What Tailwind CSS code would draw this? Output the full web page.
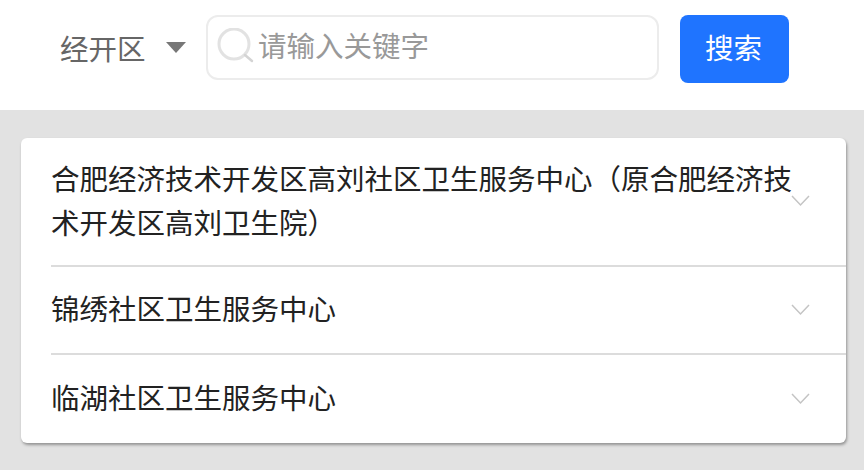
<!DOCTYPE html>
<html lang="zh-CN">
<head>
    <meta charset="UTF-8">
    <meta name="viewport" content="width=device-width, initial-scale=1.0">
    <title>社区卫生服务中心</title>
    <script src="https://cdn.jsdelivr.net/npm/@tailwindcss/browser@4"></script>
</head>
<body class="h-[470px] overflow-hidden bg-[#e2e2e2] font-['Roboto','Noto_Sans_CJK_SC',sans-serif]">
    <!-- Search bar -->
    <div class="h-[110px] bg-white flex items-start pt-[15px]">
        <div class="ml-[60px] w-[146px] h-[64px] flex items-center shrink-0">
            <span class="text-[28.5px] leading-[70px] pt-[7px] text-[#666]">经开区</span>
            <svg class="ml-[19px] mt-[1px]" width="22" height="13" viewBox="0 0 22 13"><path d="M1 1h20L11 12z" fill="#777"/></svg>
        </div>
        <div class="w-[453px] h-[65px] border-2 border-[#ececec] rounded-[12px] flex items-center pl-[9px]">
            <svg class="shrink-0 mt-[-2px]" width="38" height="38" viewBox="0 0 38 38" fill="none"><circle cx="17" cy="16" r="15" stroke="#e2e2e2" stroke-width="3"/><path d="M28 27l7 6" stroke="#d4d4d4" stroke-width="2.500" stroke-linecap="round"/></svg>
            <span class="ml-[3px] pt-[2px] text-[28.5px] text-[#999]">请输入关键字</span>
        </div>
        <button class="ml-[21px] w-[109px] h-[68px] pt-[2px] pr-[2px] rounded-[8px] bg-[#1f74ff] text-white text-[28.5px]">搜索</button>
    </div>

    <!-- List -->
    <div class="mt-[28px] ml-[21px] w-[825px] h-[305px] bg-white rounded-[6px] shadow-[1px_2px_3px_rgba(0,0,0,0.35)] pl-[30px] text-[28.5px] leading-[44px] text-[#222]">
        <div class="h-[129px] border-b-2 border-[#dcdcdc] flex items-center justify-between pt-[3px]">
            <p class="w-[745px] shrink-0 mr-[-5px]">合肥经济技术开发区高刘社区卫生服务中心（原合肥经济技术开发区高刘卫生院）</p>
            <svg class="mr-[36px] mt-[-5px] shrink-0" width="19" height="12" viewBox="0 0 19 12" fill="none"><path d="M1 1l8.500 9L18 1" stroke="#c4c4c4" stroke-width="1.500"/></svg>
        </div>
        <div class="h-[88px] border-b-2 border-[#dcdcdc] flex items-center justify-between pt-[2px]">
            <p>锦绣社区卫生服务中心</p>
            <svg class="mr-[36px] mt-[-2px] shrink-0" width="19" height="12" viewBox="0 0 19 12" fill="none"><path d="M1 1l8.500 9L18 1" stroke="#c4c4c4" stroke-width="1.500"/></svg>
        </div>
        <div class="h-[88px] flex items-center justify-between pt-[1px]">
            <p>临湖社区卫生服务中心</p>
            <svg class="mr-[36px] mt-[-1px] shrink-0" width="19" height="12" viewBox="0 0 19 12" fill="none"><path d="M1 1l8.500 9L18 1" stroke="#c4c4c4" stroke-width="1.500"/></svg>
        </div>
    </div>
</body>
</html>
